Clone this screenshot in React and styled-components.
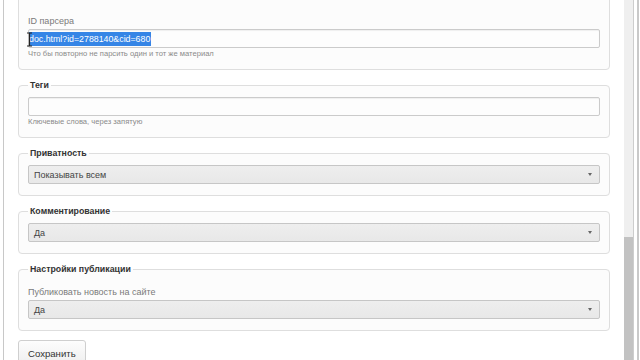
import React from "react";
import styled, { createGlobalStyle } from "styled-components";

const GlobalStyle = createGlobalStyle`
  html, body {
    margin: 0;
    padding: 0;
    background: #fff;
  }
  body {
    font-family: "Liberation Sans", Arial, sans-serif;
    overflow: hidden;
  }
`;

const Screen = styled.div`
  display: flex;
  width: 640px;
  height: 360px;
  overflow: hidden;
  background: #fff;
`;

const Gutter = styled.div`
  flex: none;
  width: 3px;
  border-right: 1px solid #c8c8c8;
`;

const Content = styled.div`
  flex: 1;
  min-width: 0;
  display: flex;
  flex-direction: column;
  align-items: stretch;
  gap: 9px;
  padding: 0 10px 0 14px;
  margin-top: -10px;
`;

const Box = styled.fieldset`
  margin: 0;
  min-width: 0;
  border: 1px solid #dedede;
  border-radius: 4px;
  background: #fcfcfc;
  padding: ${(p) => (p.$plain ? "19px 9px 11px" : "6px 9px 11px")};
`;

const Legend = styled.legend`
  margin: 0;
  padding: 0 2px;
  font-size: 8.8px;
  line-height: 12px;
  font-weight: bold;
  color: #333;
`;

const Label = styled.div`
  margin-top: 5px;
  margin-bottom: 2px;
  font-size: 9px;
  line-height: 12px;
  color: #7a7a7a;
`;

const Hint = styled.div`
  margin-top: 1px;
  font-size: 7.6px;
  line-height: 9px;
  color: #8a8a8a;
`;

const Field = styled.div`
  position: relative;
  box-sizing: border-box;
  height: 19px;
  display: flex;
  align-items: center;
  border: 1px solid #cbcbcb;
  border-radius: 2px;
  background: #fdfdfd;
  box-shadow: inset 0 1px 1px rgba(0, 0, 0, 0.06);
  font-size: 8.8px;
  color: #333;
`;

const Selected = styled.span`
  background: #3585e6;
  color: #fff;
  line-height: 14px;
  padding: 0 1px 0 0;
`;

const Cursor = styled.svg`
  position: absolute;
  left: -3px;
  top: 2px;
`;

const Select = styled.div`
  box-sizing: border-box;
  height: 19px;
  display: flex;
  align-items: center;
  justify-content: space-between;
  padding: 0 7px 0 5px;
  border: 1px solid #c6c6c6;
  border-radius: 2px;
  background: linear-gradient(#eeeeee, #e8e8e8);
  font-size: 9px;
  color: #444;
`;

const Caret = styled.span`
  width: 0;
  height: 0;
  border-left: 2.5px solid transparent;
  border-right: 2.5px solid transparent;
  border-top: 3px solid #666;
`;

const Actions = styled.div`
  display: flex;
`;

const Button = styled.button`
  font-family: inherit;
  font-size: 9.6px;
  color: #333;
  height: 26px;
  padding: 0 9px;
  border: 1px solid #cfcfcf;
  border-radius: 3px;
  background: linear-gradient(#fdfdfd, #eeeeee);
`;

const Scrollbar = styled.div`
  flex: none;
  width: 20px;
  display: flex;
  padding-left: 4px;
  box-sizing: border-box;
`;

const Track = styled.div`
  width: 9px;
  display: flex;
  flex-direction: column;
  padding-top: 237px;
  background: #efefef;
  border-right: 1px solid #cdcdcd;
`;

const Thumb = styled.div`
  flex: 1;
  background: #c2c2c2;
`;

const Edge = styled.div`
  width: 2px;
  margin-left: 3px;
  background: #c9c9c9;
`;

function SelectBox({ value }) {
  return (
    <Select>
      <span>{value}</span>
      <Caret />
    </Select>
  );
}

export default function App() {
  return (
    <>
      <GlobalStyle />
      <Screen>
        <Gutter />
        <Content>
          <Box $plain>
            <Label>ID парсера</Label>
            <Field>
              <Selected>doc.html?id=2788140&amp;cid=680</Selected>
              <Cursor width="7" height="15" viewBox="0 0 7 15">
                <path d="M1 1h2.5M3.5 1h2.5M3.5 1v13M1 14h2.5M3.5 14h2.5" stroke="#222" strokeWidth="1.2" fill="none" />
              </Cursor>
            </Field>
            <Hint>Что бы повторно не парсить один и тот же материал</Hint>
          </Box>

          <Box>
            <Legend>Теги</Legend>
            <Field />
            <Hint>Ключевые слова, через запятую</Hint>
          </Box>

          <Box>
            <Legend>Приватность</Legend>
            <SelectBox value="Показывать всем" />
          </Box>

          <Box>
            <Legend>Комментирование</Legend>
            <SelectBox value="Да" />
          </Box>

          <Box>
            <Legend>Настройки публикации</Legend>
            <Label>Публиковать новость на сайте</Label>
            <SelectBox value="Да" />
          </Box>

          <Actions>
            <Button>Сохранить</Button>
          </Actions>
        </Content>
        <Scrollbar>
          <Track>
            <Thumb />
          </Track>
          <Edge />
        </Scrollbar>
      </Screen>
    </>
  );
}
